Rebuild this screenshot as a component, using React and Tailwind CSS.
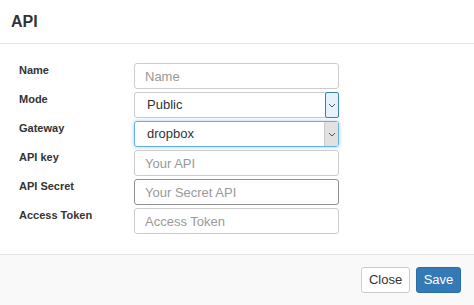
import React from "react";

const fields = [
  { label: "Name", type: "input", placeholder: "Name" },
  { label: "Mode", type: "select", value: "Public", hover: true },
  { label: "Gateway", type: "select", value: "dropbox", focus: true },
  { label: "API key", type: "input", placeholder: "Your API" },
  { label: "API Secret", type: "input", placeholder: "Your Secret API", dark: true },
  { label: "Access Token", type: "input", placeholder: "Access Token" },
];

function Chevron() {
  return (
    <svg width="8" height="5" viewBox="0 0 8 5" fill="none">
      <path d="M1 1l3 3 3-3" stroke="#555" strokeWidth="1" />
    </svg>
  );
}

function SelectBox({ value, hover, focus }) {
  return (
    <div
      className={`flex h-[26px] w-[205px] items-stretch rounded-[3px] border bg-white ${
        focus
          ? "border-[#66afe9] shadow-[0_0_4px_rgba(102,175,233,0.6)]"
          : "border-[#ccc]"
      }`}
    >
      <span className="flex flex-1 items-center pl-[12px] text-[13px] text-[#333]">{value}</span>
      <span
        className={`flex w-[14px] items-center justify-center ${
          hover
            ? "border border-[#3c7fb1] bg-[#e5f1fb] -my-px -mr-px rounded-[2px]"
            : "border-l border-[#ccc] bg-[#e1e1e1]"
        }`}
      >
        <Chevron />
      </span>
    </div>
  );
}

export default function App() {
  return (
    <div className="flex h-[305px] w-[474px] flex-col bg-white font-['Liberation_Sans',Arial,sans-serif] text-[#333]">
      <div className="flex h-[44px] items-center border-b border-[#e5e5e5] px-[11px]">
        <h4 className="text-[16px] font-bold leading-none">API</h4>
      </div>

      <div className="flex flex-1 flex-col gap-[3px] pl-[19px] pt-[19px]">
        {fields.map((field) => (
          <div key={field.label} className="flex items-start">
            <label className="w-[115px] text-[11px] font-bold leading-[14px]">
              {field.label}
            </label>
            {field.type === "select" ? (
              <SelectBox value={field.value} hover={field.hover} focus={field.focus} />
            ) : (
              <input
                readOnly
                placeholder={field.placeholder}
                className={`h-[26px] w-[205px] rounded-[3px] border bg-white px-[10px] text-[13px] outline-none placeholder:text-[#999] ${
                  field.dark ? "border-[#8f8f8f]" : "border-[#ccc]"
                }`}
              />
            )}
          </div>
        ))}
      </div>

      <div className="flex h-[51px] items-start justify-end gap-[6px] border-t border-[#e5e5e5] bg-[#f9f9f9] pr-[13px] pt-[12px]">
        <button className="h-[26px] w-[49px] rounded-[3px] border border-[#ccc] bg-white text-[13px] text-[#333]">
          Close
        </button>
        <button className="h-[26px] w-[45px] rounded-[3px] border border-[#2e6da4] bg-[#337ab7] text-[13px] text-white">
          Save
        </button>
      </div>
    </div>
  );
}
